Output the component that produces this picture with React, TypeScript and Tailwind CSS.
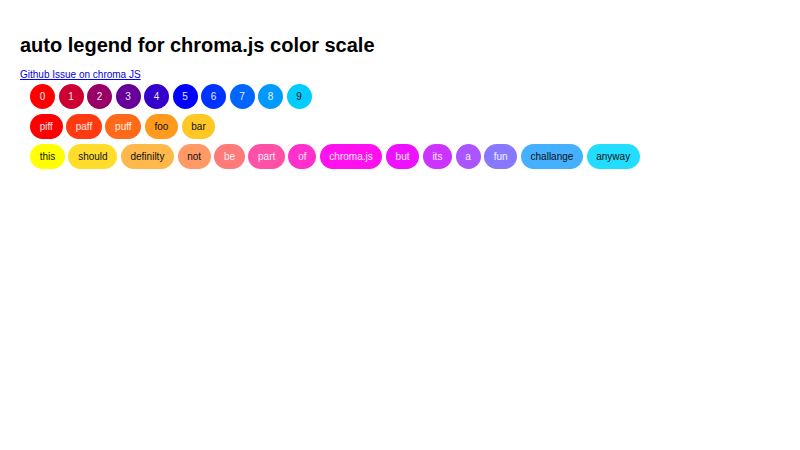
const digits = [
  { label: "0", bg: "bg-[#ff0000]", dark: false },
  { label: "1", bg: "bg-[#cc0033]", dark: false },
  { label: "2", bg: "bg-[#990066]", dark: false },
  { label: "3", bg: "bg-[#660099]", dark: false },
  { label: "4", bg: "bg-[#3300cc]", dark: false },
  { label: "5", bg: "bg-[#0000ff]", dark: false },
  { label: "6", bg: "bg-[#0033ff]", dark: false },
  { label: "7", bg: "bg-[#0066ff]", dark: false },
  { label: "8", bg: "bg-[#0099ff]", dark: false },
  { label: "9", bg: "bg-[#00ccff]", dark: true },
];

const words = [
  { label: "piff", bg: "bg-[#ff0000]", dark: false },
  { label: "paff", bg: "bg-[#ff3a10]", dark: false },
  { label: "puff", bg: "bg-[#ff6a18]", dark: false },
  { label: "foo", bg: "bg-[#ff9a1c]", dark: true },
  { label: "bar", bg: "bg-[#ffc824]", dark: true },
];

const sentence = [
  { label: "this", bg: "bg-[#ffff00]", dark: true },
  { label: "should", bg: "bg-[#ffdd2a]", dark: true },
  { label: "definilty", bg: "bg-[#ffb84a]", dark: true },
  { label: "not", bg: "bg-[#ff9966]", dark: true },
  { label: "be", bg: "bg-[#ff7a7a]", dark: false },
  { label: "part", bg: "bg-[#ff50a8]", dark: false },
  { label: "of", bg: "bg-[#ff30cc]", dark: false },
  { label: "chroma.js", bg: "bg-[#ff10ee]", dark: false },
  { label: "but", bg: "bg-[#ee11ff]", dark: false },
  { label: "its", bg: "bg-[#cc33ff]", dark: false },
  { label: "a", bg: "bg-[#aa55ff]", dark: false },
  { label: "fun", bg: "bg-[#8877ff]", dark: false },
  { label: "challange", bg: "bg-[#44b0ff]", dark: true },
  { label: "anyway", bg: "bg-[#22ddff]", dark: true },
];

type Item = { label: string; bg: string; dark: boolean };

const Legend = ({ items, round }: { items: Item[]; round?: boolean }) => (
  <div className="flex gap-[3.5px]">
    {items.map((item) => (
      <span
        key={item.label}
        className={`h-[25px] rounded-full flex items-center justify-center text-[10px] ${
          round ? "w-[25px]" : "min-w-[25px] px-[9.7px]"
        } ${item.bg} ${item.dark ? "text-[#111]" : "text-white/90"}`}
      >
        {item.label}
      </span>
    ))}
  </div>
);

export default function App() {
  return (
    <div className="w-[800px] h-[450px] bg-white px-5 pt-[34px] font-['Liberation_Sans',Arial,sans-serif] text-black">
      <h1 className="text-[20px] leading-[23px] font-bold">auto legend for chroma.js color scale</h1>
      <a href="#" className="block mt-[12px] text-[10px] leading-[11.5px] text-[#0000ee] underline w-fit">
        Github Issue on chroma JS
      </a>
      <div className="flex flex-col gap-[5px] pl-[10px] mt-[3.5px]">
        <Legend items={digits} round />
        <Legend items={words} />
        <Legend items={sentence} />
      </div>
    </div>
  );
}
